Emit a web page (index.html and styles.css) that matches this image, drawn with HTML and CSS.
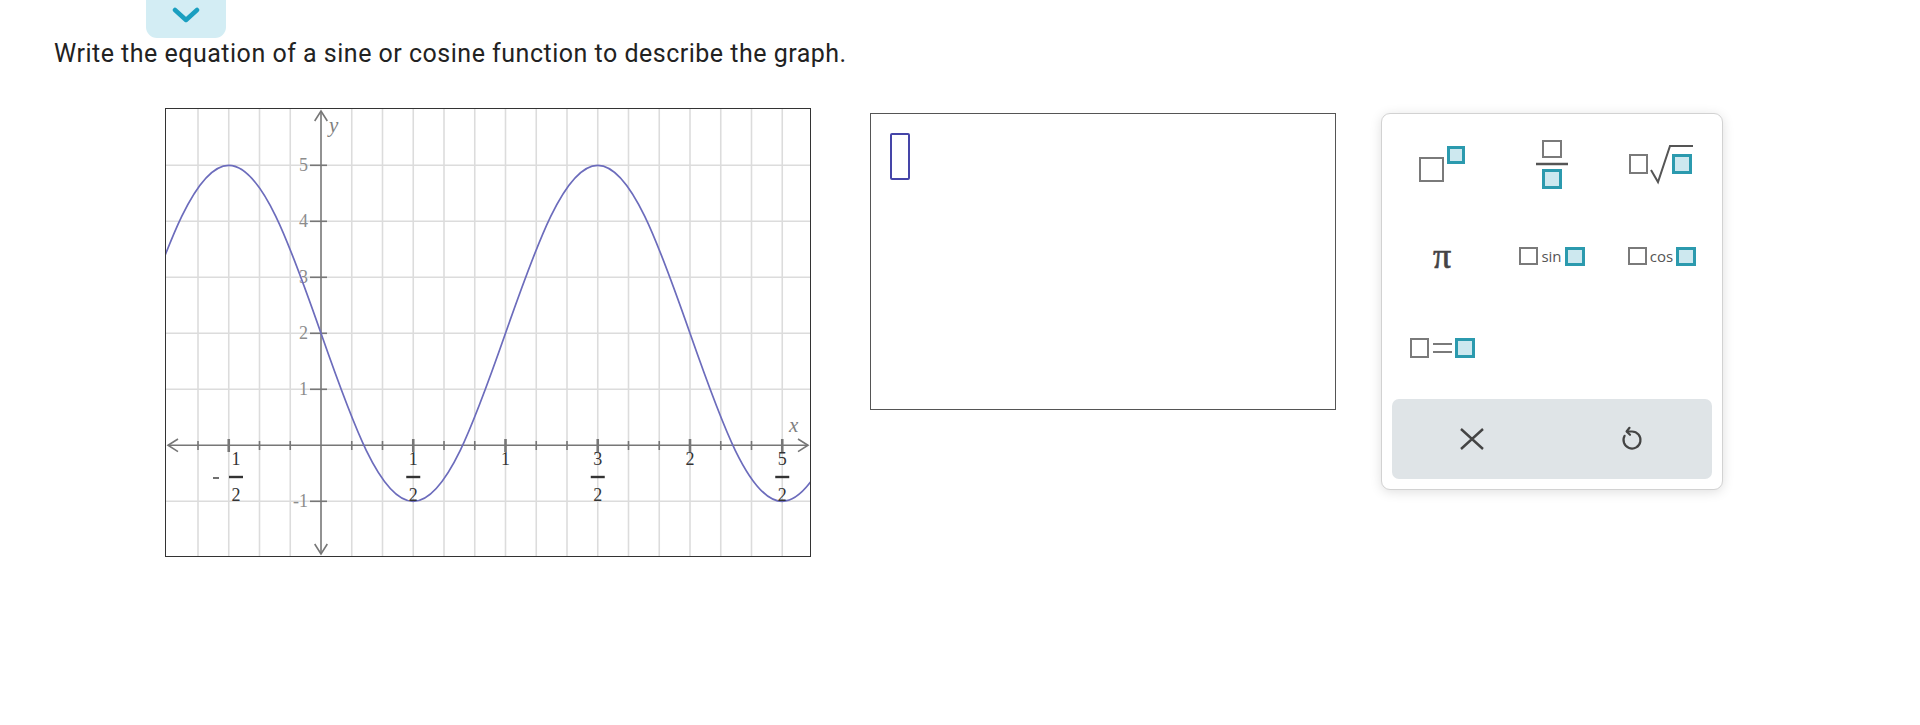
FILE: index.html
```html
<!DOCTYPE html>
<html>
<head>
<meta charset="utf-8">
<link rel="stylesheet" href="styles.css">
</head>
<body>
<div class="tab">
  <svg class="chev" width="28" height="16" viewBox="0 0 28 16"><polyline points="3,3 14,13 25,3" fill="none" stroke="#1a9fc0" stroke-width="4.5" stroke-linecap="round" stroke-linejoin="round"/></svg>
</div>
<div class="title">Write the equation of a sine or cosine function to describe the graph.</div>
<div class="main">
  <div class="graph">
    <svg width="644" height="447" viewBox="0 0 644 447">
      <g stroke="#dcdcdc" stroke-width="1.6">
        <line x1="32" y1="0" x2="32" y2="447"/>
        <line x1="62.75" y1="0" x2="62.75" y2="447"/>
        <line x1="93.5" y1="0" x2="93.5" y2="447"/>
        <line x1="124.25" y1="0" x2="124.25" y2="447"/>
        <line x1="185.75" y1="0" x2="185.75" y2="447"/>
        <line x1="216.5" y1="0" x2="216.5" y2="447"/>
        <line x1="247.25" y1="0" x2="247.25" y2="447"/>
        <line x1="278" y1="0" x2="278" y2="447"/>
        <line x1="308.75" y1="0" x2="308.75" y2="447"/>
        <line x1="339.5" y1="0" x2="339.5" y2="447"/>
        <line x1="370.25" y1="0" x2="370.25" y2="447"/>
        <line x1="401" y1="0" x2="401" y2="447"/>
        <line x1="431.75" y1="0" x2="431.75" y2="447"/>
        <line x1="462.5" y1="0" x2="462.5" y2="447"/>
        <line x1="493.25" y1="0" x2="493.25" y2="447"/>
        <line x1="524" y1="0" x2="524" y2="447"/>
        <line x1="554.75" y1="0" x2="554.75" y2="447"/>
        <line x1="585.5" y1="0" x2="585.5" y2="447"/>
        <line x1="616.25" y1="0" x2="616.25" y2="447"/>
        <line x1="0" y1="56.3" x2="644" y2="56.3"/>
        <line x1="0" y1="112.3" x2="644" y2="112.3"/>
        <line x1="0" y1="168.3" x2="644" y2="168.3"/>
        <line x1="0" y1="224.3" x2="644" y2="224.3"/>
        <line x1="0" y1="280.3" x2="644" y2="280.3"/>
        <line x1="0" y1="392.3" x2="644" y2="392.3"/>
      </g>
      <g stroke="#777" stroke-width="1.6" fill="none">
        <line x1="2" y1="336.3" x2="642" y2="336.3"/>
        <polyline points="12,330 2,336.3 12,342.6"/>
        <polyline points="632,330 642,336.3 632,342.6"/>
        <line x1="155" y1="2" x2="155" y2="445"/>
        <polyline points="148.7,12 155,2 161.3,12"/>
        <polyline points="148.7,435 155,445 161.3,435"/>
        <line x1="144" y1="56.3" x2="161" y2="56.3"/>
        <line x1="144" y1="112.3" x2="161" y2="112.3"/>
        <line x1="144" y1="168.3" x2="161" y2="168.3"/>
        <line x1="144" y1="224.3" x2="161" y2="224.3"/>
        <line x1="144" y1="280.3" x2="161" y2="280.3"/>
        <line x1="144" y1="392.3" x2="161" y2="392.3"/>
        <g>
          <line x1="32" y1="332" x2="32" y2="341"/>
          <line x1="93.5" y1="332" x2="93.5" y2="341"/>
          <line x1="124.25" y1="332" x2="124.25" y2="341"/>
          <line x1="185.75" y1="332" x2="185.75" y2="341"/>
          <line x1="216.5" y1="332" x2="216.5" y2="341"/>
          <line x1="278" y1="332" x2="278" y2="341"/>
          <line x1="308.75" y1="332" x2="308.75" y2="341"/>
          <line x1="370.25" y1="332" x2="370.25" y2="341"/>
          <line x1="401" y1="332" x2="401" y2="341"/>
          <line x1="462.5" y1="332" x2="462.5" y2="341"/>
          <line x1="493.25" y1="332" x2="493.25" y2="341"/>
          <line x1="554.75" y1="332" x2="554.75" y2="341"/>
          <line x1="585.5" y1="332" x2="585.5" y2="341"/>
        </g>
        <g stroke-width="2.6">
          <line x1="62.75" y1="330" x2="62.75" y2="343"/>
          <line x1="247.25" y1="330" x2="247.25" y2="343"/>
          <line x1="339.5" y1="330" x2="339.5" y2="343"/>
          <line x1="431.75" y1="330" x2="431.75" y2="343"/>
          <line x1="524" y1="330" x2="524" y2="343"/>
          <line x1="616.25" y1="330" x2="616.25" y2="343"/>
        </g>
      </g>
      <g class="ylab" text-anchor="end">
        <text x="142" y="62.3">5</text>
        <text x="142" y="118.3">4</text>
        <text x="142" y="174.3">3</text>
        <text x="142" y="230.3">2</text>
        <text x="142" y="286.3">1</text>
        <text x="142" y="398.3">-1</text>
      </g>
      <text class="axname" x="163" y="23">y</text>
      <text class="axname" x="623" y="323">x</text>
      <path d="M-29.5,224.3 C1.25,136.34 29.6,56.3 62.75,56.3 C95.9,56.3 124.25,136.34 155,224.3 C185.75,312.26 214.1,392.3 247.25,392.3 C280.4,392.3 308.75,312.26 339.5,224.3 C370.25,136.34 398.6,56.3 431.75,56.3 C464.9,56.3 493.25,136.34 524,224.3 C554.75,312.26 583.1,392.3 616.25,392.3 C649.4,392.3 677.75,312.26 708.5,224.3" fill="none" stroke="#6c6cbc" stroke-width="1.7"/>
      <g class="xlab" text-anchor="middle">
        <line class="minus" x1="47" y1="369" x2="53" y2="369"/>
        <text x="70" y="356">1</text>
        <line x1="63" y1="368" x2="77" y2="368"/>
        <text x="70" y="392">2</text>
        <text x="247.25" y="356">1</text>
        <line x1="240.25" y1="368" x2="254.25" y2="368"/>
        <text x="247.25" y="392">2</text>
        <text x="339.5" y="356">1</text>
        <text x="431.75" y="356">3</text>
        <line x1="424.75" y1="368" x2="438.75" y2="368"/>
        <text x="431.75" y="392">2</text>
        <text x="524" y="356">2</text>
        <text x="616.25" y="356">5</text>
        <line x1="609.25" y1="368" x2="623.25" y2="368"/>
        <text x="616.25" y="392">2</text>
      </g>
    </svg>
  </div>
  <div class="answer"><span class="cursor"></span></div>
  <div class="keypad">
    <div class="keys">
      <div class="key">
        <svg width="50" height="40" viewBox="0 0 50 40"><rect x="3" y="14" width="23" height="23" fill="#fff" stroke="#7a7a7a" stroke-width="2"/><rect x="31.5" y="3.5" width="15" height="15" fill="#cde8ef" stroke="#2b9aae" stroke-width="3"/></svg>
      </div>
      <div class="key">
        <svg width="36" height="53" viewBox="0 0 36 53"><rect x="9" y="3" width="18" height="16" fill="#fff" stroke="#7a7a7a" stroke-width="2"/><line x1="2" y1="26" x2="34" y2="26" stroke="#555" stroke-width="2.5"/><rect x="9.5" y="32.5" width="17" height="17" fill="#cde8ef" stroke="#2b9aae" stroke-width="3"/></svg>
      </div>
      <div class="key">
        <svg width="68" height="42" viewBox="0 0 68 42"><rect x="2" y="12" width="17" height="18" fill="#fff" stroke="#7a7a7a" stroke-width="2"/><polyline points="23,27 30,39 42,3 65,3" fill="none" stroke="#555" stroke-width="2"/><rect x="45.5" y="12.5" width="17" height="17" fill="#cde8ef" stroke="#2b9aae" stroke-width="3"/></svg>
      </div>
      <div class="key"><span class="pi">π</span></div>
      <div class="key"><span class="fn"><span class="gbox"></span><span class="fname">sin</span><span class="tbox"></span></span></div>
      <div class="key"><span class="fn"><span class="gbox"></span><span class="fname">cos</span><span class="tbox"></span></span></div>
      <div class="key"><span class="fn"><span class="gbox tall"></span><span class="eq"></span><span class="tbox tall"></span></span></div>
      <div class="key"></div>
      <div class="key"></div>
    </div>
    <div class="bar">
      <div class="act">
        <svg width="26" height="24" viewBox="0 0 26 24"><path d="M2 2 L24 22 M24 2 L2 22" stroke="#444" stroke-width="2.4" fill="none"/></svg>
      </div>
      <div class="act">
        <svg width="26" height="26" viewBox="0 0 26 26"><path d="M8 5.5 L13 5.5 A8.5 8.5 0 1 1 5.6 9.8" fill="none" stroke="#444" stroke-width="2.2" stroke-linecap="round"/><polyline points="10.5,1.8 7.6,5.5 11,8.8" fill="none" stroke="#444" stroke-width="2.2" stroke-linecap="round" stroke-linejoin="round"/></svg>
      </div>
    </div>
  </div>
</div>
</body>
</html>
```
FILE: styles.css
```css
html, body {
  margin: 0;
  padding: 0;
  background: #fff;
}
body {
  font-family: Roboto, "Liberation Sans", sans-serif;
  color: #222;
  width: 1920px;
  height: 725px;
  overflow: hidden;
}
.tab {
  margin-left: 146px;
  width: 80px;
  height: 38px;
  background: #d3edf4;
  border-radius: 0 0 11px 11px;
  display: flex;
  justify-content: center;
  padding-top: 7px;
  box-sizing: border-box;
}
.chev {
  display: block;
}
.title {
  margin: 2px 0 0 54px;
  font-size: 25px;
  letter-spacing: 0.5px;
  line-height: 28px;
  color: #222;
}
.main {
  display: flex;
  align-items: flex-start;
  padding-left: 165px;
}
.graph {
  margin-top: 40px;
  border: 1px solid #333;
  width: 644px;
  height: 447px;
}
.graph svg {
  display: block;
}
.ylab text {
  font-family: "Liberation Serif", "DejaVu Serif", serif;
  font-size: 18px;
  fill: #8c8c8c;
}
.xlab text {
  font-family: "Liberation Serif", "DejaVu Serif", serif;
  font-size: 18px;
  fill: #333;
}
.xlab line {
  stroke: #333;
  stroke-width: 2.4;
}
.xlab line.minus {
  stroke-width: 1.4;
}
.axname {
  font-family: "Liberation Serif", "DejaVu Serif", serif;
  font-style: italic;
  font-size: 21px;
  fill: #808080;
}
.answer {
  margin: 45px 0 0 59px;
  border: 1px solid #555;
  padding: 19px 0 0 19px;
  box-sizing: content-box;
  width: 445px;
  height: 276px;
}
.cursor {
  display: block;
  width: 16px;
  height: 43px;
  border: 2px solid #4545a8;
  border-radius: 2px;
}
.keypad {
  margin: 45px 0 0 45px;
  border: 1px solid #d2d2d2;
  border-radius: 9px;
  padding: 0 10px 10px;
  box-sizing: border-box;
  width: 342px;
  box-shadow: 0 2px 12px rgba(0, 0, 0, 0.13);
  background: #fff;
}
.keys {
  display: grid;
  grid-template-columns: repeat(3, 110px);
  grid-auto-rows: 92px;
  margin: 0 -5px;
  padding-top: 4px;
}
.key {
  display: flex;
  align-items: center;
  justify-content: center;
}
.key svg {
  display: block;
}
.pi {
  font-family: "Liberation Serif", serif;
  font-size: 36px;
  line-height: 36px;
  color: #444;
  -webkit-text-stroke: 0.6px #444;
}
.fn {
  display: flex;
  align-items: center;
}
.gbox {
  width: 15px;
  height: 14px;
  border: 2px solid #7a7a7a;
  background: #fff;
}
.tbox {
  width: 14px;
  height: 13px;
  border: 3px solid #2b9aae;
  background: #cde8ef;
}
.gbox.tall {
  height: 16px;
}
.tbox.tall {
  height: 14px;
}
.fname {
  font-family: "Open Sans", Lato, sans-serif;
  font-size: 15px;
  line-height: 18px;
  color: #555;
  margin: 0 3px 0 3px;
}
.eq {
  width: 19px;
  height: 6px;
  border-top: 2.5px solid #7a7a7a;
  border-bottom: 2.5px solid #7a7a7a;
  margin: 0 3px 0 4px;
}
.bar {
  margin-top: 5px;
  height: 80px;
  background: #dfe4e7;
  border-radius: 7px;
  display: flex;
}
.act {
  flex: 1;
  display: flex;
  align-items: center;
  justify-content: center;
}
.act svg {
  display: block;
}
```
